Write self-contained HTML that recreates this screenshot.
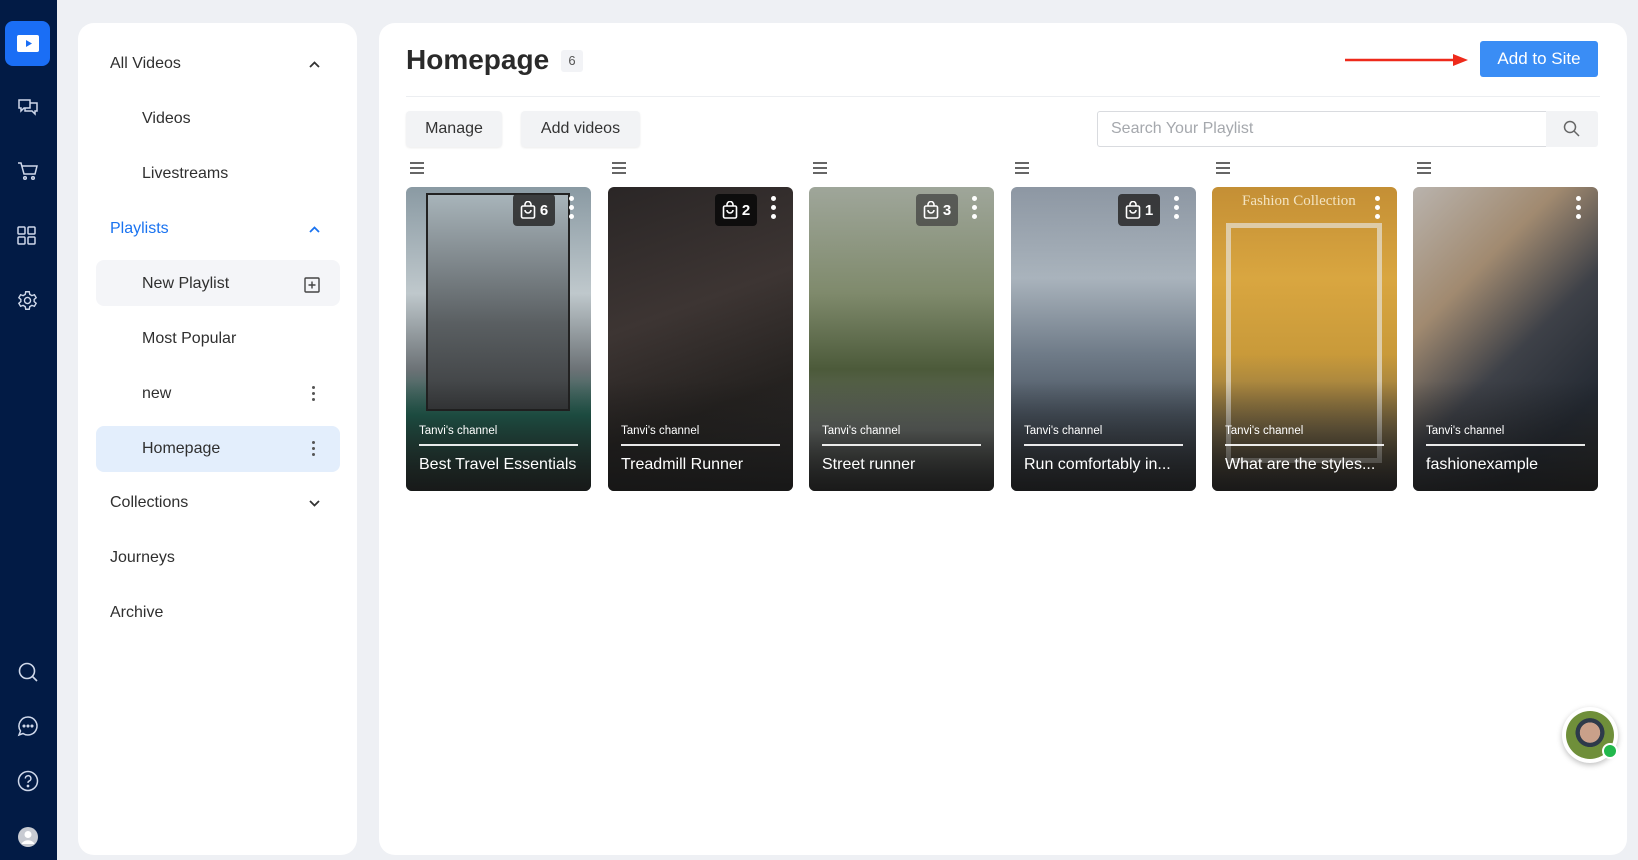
<!DOCTYPE html>
<html><head><meta charset="utf-8"><style>
*{box-sizing:border-box;margin:0;padding:0}
body{width:1638px;height:860px;background:#eef0f4;font-family:"Liberation Sans",sans-serif;position:relative;overflow:hidden;color:#2b2b2b}
.side{position:absolute;left:0;top:0;width:57px;height:860px;background:#021b45}
.side svg{position:absolute;left:17px}
.act{position:absolute;left:5px;top:21px;width:45px;height:45px;background:#1a6ef5;border-radius:8px}
.nav{position:absolute;left:78px;top:23px;width:279px;height:832px;background:#fff;border-radius:16px}
.ni{position:absolute;font-size:16px;color:#2f2f2f}
.hl{position:absolute;left:18px;width:244px;height:46px;border-radius:8px}
.main{position:absolute;left:379px;top:23px;width:1248px;height:832px;background:#fff;border-radius:16px}
.btn{position:absolute;background:#f2f3f5;border-radius:4px;font-size:16px;color:#333;display:flex;align-items:center;justify-content:center;box-shadow:0 1px 2px rgba(0,0,0,.08)}
.card{position:absolute;top:187px;width:185px;height:304px;border-radius:6px;overflow:hidden}
.card .ch{position:absolute;left:13px;top:238px;font-size:11.5px;color:#fff}
.card .ln{position:absolute;left:13px;right:13px;top:257px;height:2px;background:#fff;opacity:.9}
.card .tt{position:absolute;left:13px;top:269px;font-size:16px;color:#fff;white-space:nowrap}
.card .sh{position:absolute;left:0;right:0;bottom:0;height:110px;background:linear-gradient(rgba(0,0,0,0),rgba(20,20,20,.85))}
.bag{position:absolute;top:7px;width:42px;height:32px;background:rgba(40,40,40,.85);border-radius:4px;color:#fff;font-size:15px;font-weight:bold;display:flex;align-items:center;justify-content:center;gap:4px}
.dots{position:absolute;top:9px;width:6px}
.dots i{display:block;width:5px;height:5px;background:#fff;border-radius:50%;margin-bottom:4px}
.hb{position:absolute;top:162px;width:14px;height:12px;border-top:2px solid #666;border-bottom:2px solid #666}
.hb:after{content:"";position:absolute;left:0;right:0;top:3px;height:2px;background:#666}
</style></head><body>
<div class="side">
<div class="act"></div>
<svg style="top:34px;left:16px" width="24" height="20" viewBox="0 0 24 20"><rect x="1" y="1" width="22" height="17" rx="2" fill="#fff"/><path d="M10 6l6 3.5-6 3.5z" fill="#1a6ef5"/></svg>
<svg style="top:97px" width="22" height="20" viewBox="0 0 22 20" fill="none" stroke="#cfd8ea" stroke-width="1.5"><path d="M2 3h11v8H7l-3 3v-3H2z"/><path d="M8 11v3h7l3 3v-3h2V6h-7"/></svg>
<svg style="top:161px" width="22" height="20" viewBox="0 0 22 20" fill="none" stroke="#cfd8ea" stroke-width="1.5"><path d="M1 2h3l3 11h11l2-8H5"/><circle cx="8" cy="17" r="1.3"/><circle cx="16" cy="17" r="1.3"/></svg>
<svg style="top:226px" width="20" height="20" viewBox="0 0 20 20" fill="none" stroke="#cfd8ea" stroke-width="1.5"><rect x="1" y="1" width="7" height="7" rx="1"/><rect x="11" y="1" width="7" height="7" rx="1"/><rect x="1" y="11" width="7" height="7" rx="1"/><rect x="11" y="11" width="7" height="7" rx="1"/></svg>
<svg style="top:290px" width="21" height="21" viewBox="0 0 24 24" fill="none" stroke="#cfd8ea" stroke-width="1.6"><circle cx="12" cy="12" r="3.5"/><path d="M10 2h4l.6 3 2.4 1.4 2.9-1 2 3.4-2.3 2v2.4l2.3 2-2 3.4-2.9-1-2.4 1.4-.6 3h-4l-.6-3-2.4-1.4-2.9 1-2-3.4 2.3-2v-2.4l-2.3-2 2-3.4 2.9 1L9.4 5z"/></svg>
<svg style="top:661px" width="22" height="22" viewBox="0 0 22 22" fill="none" stroke="#cfd8ea" stroke-width="1.6"><circle cx="10" cy="10" r="7.5"/><path d="M15.5 15.5l4.5 4.5"/></svg>
<svg style="top:715px" width="22" height="22" viewBox="0 0 22 22" fill="none" stroke="#cfd8ea" stroke-width="1.5"><path d="M11 2a9 9 0 1 1-5 16.5L2 20l1.5-4A9 9 0 0 1 11 2z"/><circle cx="7" cy="11" r=".8" fill="#cfd8ea"/><circle cx="11" cy="11" r=".8" fill="#cfd8ea"/><circle cx="15" cy="11" r=".8" fill="#cfd8ea"/></svg>
<svg style="top:770px" width="22" height="22" viewBox="0 0 22 22" fill="none" stroke="#cfd8ea" stroke-width="1.5"><circle cx="11" cy="11" r="9.5"/><path d="M8.3 8.5a2.8 2.8 0 1 1 3.8 2.6c-.8.4-1.1.9-1.1 1.8"/><circle cx="11" cy="16" r=".6" fill="#cfd8ea"/></svg>
<svg style="top:826px" width="22" height="22" viewBox="0 0 22 22"><circle cx="11" cy="11" r="10" fill="#c8cbd2"/><circle cx="11" cy="8.5" r="3.5" fill="#fff"/><path d="M4.5 18a7 6 0 0 1 13 0z" fill="#fff"/></svg>
</div>
<div class="nav">
<div class="ni" style="left:32px;top:32px">All Videos</div>
<svg style="position:absolute;left:231px;top:38px" width="11" height="8" viewBox="0 0 11 8" fill="none" stroke="#333" stroke-width="1.8"><path d="M1 6l4.5-4.5L10 6"/></svg>
<div class="ni" style="left:64px;top:87px">Videos</div>
<div class="ni" style="left:64px;top:142px">Livestreams</div>
<div class="ni" style="left:32px;top:197px;color:#1a73f0">Playlists</div>
<svg style="position:absolute;left:231px;top:203px" width="11" height="8" viewBox="0 0 11 8" fill="none" stroke="#1a73f0" stroke-width="1.8"><path d="M1 6l4.5-4.5L10 6"/></svg>
<div class="hl" style="top:237px;background:#f4f5f8"></div>
<div class="ni" style="left:64px;top:252px">New Playlist</div>
<svg style="position:absolute;left:226px;top:254px" width="16" height="16" viewBox="0 0 16 16" fill="none" stroke="#444" stroke-width="1.4"><rect x="1" y="1" width="14" height="14" rx="1"/><path d="M8 4.5v7M4.5 8h7"/></svg>
<div class="ni" style="left:64px;top:307px">Most Popular</div>
<div class="ni" style="left:64px;top:362px">new</div>
<div style="position:absolute;left:234px;top:363px;width:3px;font-size:0"><i style="display:block;width:3px;height:3px;background:#555;border-radius:50%;margin-bottom:3px"></i><i style="display:block;width:3px;height:3px;background:#555;border-radius:50%;margin-bottom:3px"></i><i style="display:block;width:3px;height:3px;background:#555;border-radius:50%"></i></div>
<div class="hl" style="top:403px;background:#e3eefc"></div>
<div class="ni" style="left:64px;top:417px">Homepage</div>
<div style="position:absolute;left:234px;top:418px;width:3px;font-size:0"><i style="display:block;width:3px;height:3px;background:#555;border-radius:50%;margin-bottom:3px"></i><i style="display:block;width:3px;height:3px;background:#555;border-radius:50%;margin-bottom:3px"></i><i style="display:block;width:3px;height:3px;background:#555;border-radius:50%"></i></div>
<div class="ni" style="left:32px;top:471px">Collections</div>
<svg style="position:absolute;left:231px;top:476px" width="11" height="8" viewBox="0 0 11 8" fill="none" stroke="#333" stroke-width="1.8"><path d="M1 2l4.5 4.5L10 2"/></svg>
<div class="ni" style="left:32px;top:526px">Journeys</div>
<div class="ni" style="left:32px;top:581px">Archive</div>
</div>
<div class="main">
<div style="position:absolute;left:27px;top:21px;font-size:28px;font-weight:bold;color:#2a2a2a">Homepage</div>
<div style="position:absolute;left:182px;top:27px;width:22px;height:22px;background:#f2f3f6;border-radius:3px;font-size:13px;color:#555;text-align:center;line-height:22px">6</div>
<svg style="position:absolute;left:966px;top:31px" width="124" height="12" viewBox="0 0 124 12"><path d="M0 6h110" stroke="#ee2a1b" stroke-width="2.5"/><path d="M108 0l15 6-15 6z" fill="#ee2a1b"/></svg>
<div style="position:absolute;left:1101px;top:18px;width:118px;height:36px;background:#3a8df5;border-radius:3px;color:#fff;font-size:17px;display:flex;align-items:center;justify-content:center">Add to Site</div>
<div style="position:absolute;left:27px;right:27px;top:73px;height:1px;background:#eceef1"></div>
<div class="btn" style="left:27px;top:88px;width:96px;height:36px">Manage</div>
<div class="btn" style="left:142px;top:88px;width:119px;height:36px">Add videos</div>
<div style="position:absolute;left:718px;top:88px;width:451px;height:36px;border:1px solid #d9dbdf;border-radius:3px 0 0 3px;font-size:16px;color:#a5a8ad;padding:8px 13px">Search Your Playlist</div>
<div style="position:absolute;left:1167px;top:88px;width:52px;height:36px;background:#f2f3f5;border-radius:0 3px 3px 0"></div>
<svg style="position:absolute;left:1184px;top:97px" width="17" height="17" viewBox="0 0 17 17" fill="none" stroke="#666" stroke-width="1.5"><circle cx="7" cy="7" r="5.5"/><path d="M11 11l5 5"/></svg>
</div>
<div class="hb" style="left:410px"></div><div class="hb" style="left:612px"></div><div class="hb" style="left:813px"></div><div class="hb" style="left:1015px"></div><div class="hb" style="left:1216px"></div><div class="hb" style="left:1417px"></div>

<div class="card" style="left:406px;background:linear-gradient(180deg,#8a9aa3 0%,#bfc8cc 35%,#6c7276 60%,#1f5e4f 75%,#2a3a35 100%)">
<div style="position:absolute;left:20px;top:6px;width:144px;height:218px;border:2px solid #222;background:linear-gradient(#a8b4ba,#5a5f62 60%,#3a3c3e)"></div>
<div class="sh"></div>
<div class="bag" style="left:107px"><svg width="16" height="18" viewBox="0 0 16 18" fill="none" stroke="#fff" stroke-width="1.6"><rect x="1.5" y="5" width="13" height="12" rx="1.5"/><path d="M5 5V3.5a3 3 0 0 1 6 0V5M5 9a3 3 0 0 0 6 0"/></svg>6</div>
<div class="dots" style="left:163px"><i></i><i></i><i></i></div>
<div class="ch">Tanvi's channel</div><div class="ln"></div><div class="tt">Best Travel Essentials</div></div>

<div class="card" style="left:608px;background:linear-gradient(160deg,#2a2626,#3d3533 40%,#252220 70%,#2c2b2b)">
<div class="sh"></div>
<div class="bag" style="left:107px;background:rgba(10,10,10,.9)"><svg width="16" height="18" viewBox="0 0 16 18" fill="none" stroke="#fff" stroke-width="1.6"><rect x="1.5" y="5" width="13" height="12" rx="1.5"/><path d="M5 5V3.5a3 3 0 0 1 6 0V5M5 9a3 3 0 0 0 6 0"/></svg>2</div>
<div class="dots" style="left:163px"><i></i><i></i><i></i></div>
<div class="ch">Tanvi's channel</div><div class="ln"></div><div class="tt">Treadmill Runner</div></div>

<div class="card" style="left:809px;background:linear-gradient(180deg,#9fa69a 0%,#7f8a6c 35%,#4c5a3a 60%,#6b706c 80%,#3a3c3a 100%)">
<div class="sh"></div>
<div class="bag" style="left:107px;background:rgba(60,60,60,.7)"><svg width="16" height="18" viewBox="0 0 16 18" fill="none" stroke="#fff" stroke-width="1.6"><rect x="1.5" y="5" width="13" height="12" rx="1.5"/><path d="M5 5V3.5a3 3 0 0 1 6 0V5M5 9a3 3 0 0 0 6 0"/></svg>3</div>
<div class="dots" style="left:163px"><i></i><i></i><i></i></div>
<div class="ch">Tanvi's channel</div><div class="ln"></div><div class="tt">Street runner</div></div>

<div class="card" style="left:1011px;background:linear-gradient(180deg,#8d97a3 0%,#a9b3bc 30%,#6f7b88 55%,#4a5561 75%,#2e3238 100%)">
<div class="sh"></div>
<div class="bag" style="left:107px"><svg width="16" height="18" viewBox="0 0 16 18" fill="none" stroke="#fff" stroke-width="1.6"><rect x="1.5" y="5" width="13" height="12" rx="1.5"/><path d="M5 5V3.5a3 3 0 0 1 6 0V5M5 9a3 3 0 0 0 6 0"/></svg>1</div>
<div class="dots" style="left:163px"><i></i><i></i><i></i></div>
<div class="ch">Tanvi's channel</div><div class="ln"></div><div class="tt">Run comfortably in...</div></div>

<div class="card" style="left:1212px;background:linear-gradient(180deg,#c48f35 0%,#d9a640 30%,#c99a3a 55%,#7c6a45 80%,#3a3633 100%)">
<div style="position:absolute;left:14px;top:36px;width:156px;height:240px;border:5px solid rgba(230,225,215,.7)"></div>
<div style="position:absolute;left:30px;top:6px;font-family:'Liberation Serif',serif;font-size:15px;color:#f3e3c0">Fashion Collection</div>
<div class="sh"></div>
<div class="dots" style="left:163px"><i></i><i></i><i></i></div>
<div class="ch">Tanvi's channel</div><div class="ln"></div><div class="tt">What are the styles...</div></div>

<div class="card" style="left:1413px;background:linear-gradient(135deg,#b9b3ad 0%,#a18a70 30%,#3e4148 55%,#242a33 80%,#2d2d2d 100%)">
<div class="sh"></div>
<div class="dots" style="left:163px"><i></i><i></i><i></i></div>
<div class="ch">Tanvi's channel</div><div class="ln"></div><div class="tt">fashionexample</div></div>

<div style="position:absolute;left:1562px;top:707px;width:56px;height:56px;border-radius:50%;background:#fff;box-shadow:0 2px 6px rgba(0,0,0,.25)"></div>
<div style="position:absolute;left:1566px;top:711px;width:48px;height:48px;border-radius:50%;background:radial-gradient(circle at 50% 45%,#c9a08a 0 28%,#2d3a4a 29% 40%,#6f8f3a 41%)"></div>
<div style="position:absolute;left:1602px;top:743px;width:16px;height:16px;border-radius:50%;background:#22b84c;border:2px solid #fff"></div>
</body></html>
